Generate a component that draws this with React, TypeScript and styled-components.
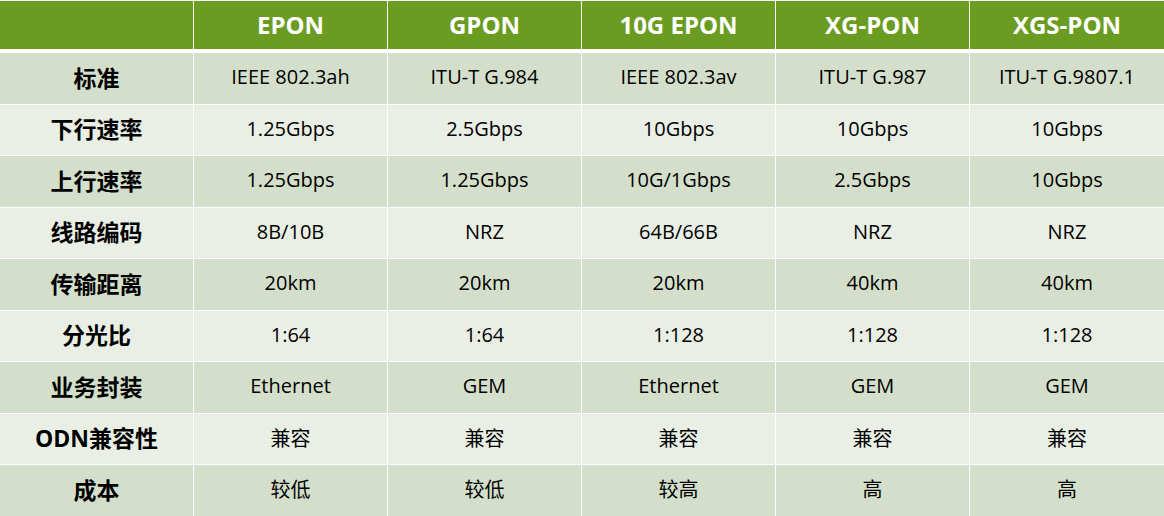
import React from "react";
import styled, { createGlobalStyle } from "styled-components";

const GlobalStyle = createGlobalStyle`
  html, body {
    margin: 0;
    padding: 0;
    background: #ffffff;
  }
`;

const Table = styled.div`
  display: grid;
  grid-template-columns: repeat(5, 193px) 1fr;
  grid-template-rows: 51px repeat(9, 50.5px);
  column-gap: 1px;
  row-gap: 1px;
  padding-top: 1px;
  width: 1164px;
  height: 516px;
  box-sizing: border-box;
  overflow: hidden;
  background: #ffffff;
  font-family: "Open Sans", "Noto Sans CJK SC", sans-serif;
`;

const HeadCell = styled.div`
  display: flex;
  align-items: center;
  justify-content: center;
  padding-bottom: 1px;
  background: #6a9c21;
  border-bottom: 3px solid #ffffff;
  color: #ffffff;
  font-size: 24px;
  font-weight: 700;
`;

const Cell = styled.div<{ $shade: "dark" | "light"; $label?: boolean }>`
  display: flex;
  align-items: center;
  justify-content: center;
  padding-bottom: 3px;
  box-sizing: border-box;
  background: ${(p) => (p.$shade === "dark" ? "#d4dfcb" : "#e9efe5")};
  color: #000000;
  font-size: ${(p) => (p.$label ? "23px" : "20px")};
  font-weight: ${(p) => (p.$label ? 700 : 400)};
`;

const columns = ["", "EPON", "GPON", "10G EPON", "XG-PON", "XGS-PON"];

const rows: string[][] = [
  ["标准", "IEEE 802.3ah", "ITU-T G.984", "IEEE 802.3av", "ITU-T G.987", "ITU-T G.9807.1"],
  ["下行速率", "1.25Gbps", "2.5Gbps", "10Gbps", "10Gbps", "10Gbps"],
  ["上行速率", "1.25Gbps", "1.25Gbps", "10G/1Gbps", "2.5Gbps", "10Gbps"],
  ["线路编码", "8B/10B", "NRZ", "64B/66B", "NRZ", "NRZ"],
  ["传输距离", "20km", "20km", "20km", "40km", "40km"],
  ["分光比", "1:64", "1:64", "1:128", "1:128", "1:128"],
  ["业务封装", "Ethernet", "GEM", "Ethernet", "GEM", "GEM"],
  ["ODN兼容性", "兼容", "兼容", "兼容", "兼容", "兼容"],
  ["成本", "较低", "较低", "较高", "高", "高"],
];

const App = () => {
  return (
    <>
      <GlobalStyle />
      <Table>
        {columns.map((c, i) => (
          <HeadCell key={`h${i}`}>{c}</HeadCell>
        ))}
        {rows.map((row, r) =>
          row.map((value, c) => (
            <Cell
              key={`${r}-${c}`}
              $shade={r % 2 === 0 ? "dark" : "light"}
              $label={c === 0}
            >
              {value}
            </Cell>
          ))
        )}
      </Table>
    </>
  );
};

export default App;
